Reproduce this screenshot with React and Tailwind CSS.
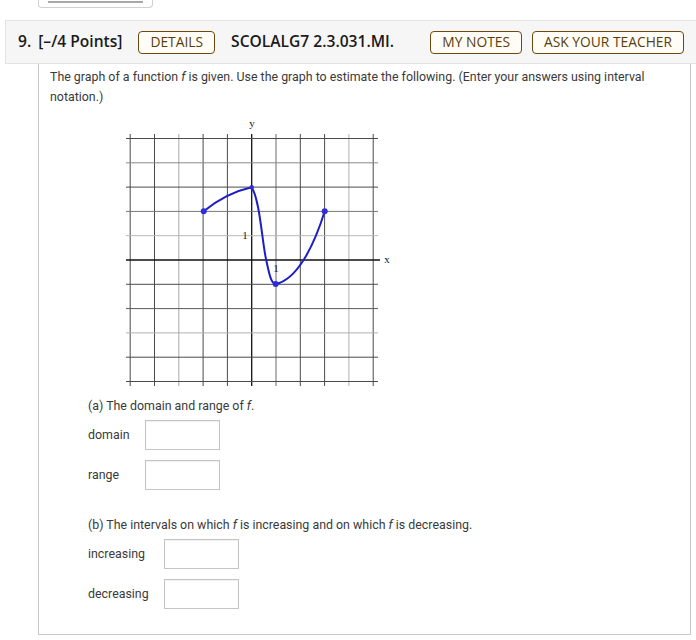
import React from 'react';

const U = 24.3;
const OX = 251.7;
const OY = 259;

// grid line shades, index 0 = -5 ... 10 = 5
const vShade = ['#4a4a4a', '#4a4a4a', '#a8a8a8', '#4a4a4a', '#4a4a4a', '#111', '#6a6a6a', '#4a4a4a', '#4a4a4a', '#b0b0b0', '#4a4a4a'];
const hShade = ['#4a4a4a', '#4a4a4a', '#b0b0b0', '#5a5a5a', '#4a4a4a', '#111', '#b8b8b8', '#777', '#4a4a4a', '#8a8a8a', '#4a4a4a'];

function Graph() {
  const px = (x) => OX + x * U;
  const py = (y) => OY - y * U;
  const steps = [-5, -4, -3, -2, -1, 0, 1, 2, 3, 4, 5];
  return (
    <svg width="280" height="280" viewBox="117 112 280 280" className="block">
      {steps.map((s, i) => (
        <line key={'v' + s} x1={px(s)} x2={px(s)} y1={133} y2={385} stroke={vShade[i]} strokeWidth={s === 0 ? 1.3 : 1} />
      ))}
      {steps.map((s, i) => (
        <line key={'h' + s} x1={126} x2={s === 0 ? 380 : 378} y1={py(-s)} y2={py(-s)} stroke={hShade[10 - i]} strokeWidth={s === 0 ? 1.3 : 1} />
      ))}
      <text x={252} y={126} fontFamily="Liberation Serif, serif" fontSize="11" textAnchor="middle" fill="#222">y</text>
      <text x={387} y={262} fontFamily="Liberation Serif, serif" fontSize="11" textAnchor="middle" fill="#222">x</text>
      <text x={245} y={238} fontFamily="Liberation Serif, serif" fontSize="11" textAnchor="middle" fill="#222">1</text>
      <text x={276} y={271} fontFamily="Liberation Serif, serif" fontSize="11" textAnchor="middle" fill="#222">1</text>
      <path
        d="M203.7,210.3 Q226,192 251.7,186.3 C260,200 262,240 266,258 C269,272 271,283 275.7,283 C296,279 313,248 324.7,210.3"
        fill="none"
        stroke="#1e1ec8"
        strokeWidth="2"
        strokeLinecap="round"
      />
      <circle cx={203.7} cy={210.3} r="3" fill="#2d2ddc" />
      <circle cx={251.7} cy={186.3} r="2.2" fill="#2d2ddc" />
      <circle cx={275.7} cy={283} r="3" fill="#2d2ddc" />
      <circle cx={324.7} cy={210.3} r="3" fill="#2d2ddc" />
    </svg>
  );
}

function Btn({ children }) {
  return (
    <div className="h-[23px] px-[11px] flex items-center rounded-[4px] border-[1.5px] border-[#6b4a12] bg-[#fffdf6] text-[13.8px] font-medium text-[#5a3d0c] leading-none">
      {children}
    </div>
  );
}

function Field({ label, width }) {
  return (
    <div className="flex items-center h-[30px]">
      <div className="text-[12.4px] text-[#3a3a3a]" style={{ width }}>{label}</div>
      <div className="w-[75px] h-[30px] border border-[#c4c4c4] bg-white shadow-[inset_0_1px_1px_rgba(0,0,0,0.06)]" />
    </div>
  );
}

export default function App() {
  return (
    <div className="w-[696px] h-[640px] bg-white overflow-hidden relative font-['Roboto',sans-serif]">
      <div className="ml-[38px] w-[115px] h-[8px] border-x border-b border-[#d0d0d0] rounded-b-[4px] pt-[1px] px-[9px]">
        <div className="h-[2px] bg-[#a8a8a8]" />
      </div>

      <div className="mt-[12px] ml-[5px] h-[44px] bg-[#f6f6f6] border-y border-l border-[#e2e2e2] flex items-center pl-[12px] pr-[12px] font-['Open_Sans',sans-serif]">
        <div className="text-[15.6px] font-semibold text-[#1a1a1a]">
          9.<span className="ml-[7px]">[–/4 Points]</span>
        </div>
        <div className="ml-[16px]"><Btn>DETAILS</Btn></div>
        <div className="ml-[16px] text-[15.6px] font-semibold text-[#1a1a1a]">SCOLALG7 2.3.031.MI.</div>
        <div className="ml-auto flex gap-[10px]">
          <Btn>MY NOTES</Btn>
          <Btn>ASK YOUR TEACHER</Btn>
        </div>
      </div>

      <div className="ml-[38px] w-[653px] h-[571px] border-x border-b border-[#c8c8c8] pl-[11px] pt-[3px]">
        <p className="text-[12.4px] leading-[20px] text-[#3a3a3a]">
          The graph of a function <i>f</i> is given. Use the graph to estimate the following. (Enter your answers using interval
          <br />
          notation.)
        </p>
        <div className="ml-[67px] mt-[6px]">
          <Graph />
        </div>
        <div className="ml-[38px] mt-[3px]">
          <p className="text-[12.4px] leading-[20px] text-[#3a3a3a]">(a) The domain and range of <i>f</i>.</p>
          <div className="mt-[4px] flex flex-col gap-[10px]">
            <Field label="domain" width={57} />
            <Field label="range" width={57} />
          </div>
          <p className="mt-[25px] text-[12.4px] leading-[20px] text-[#3a3a3a]">
            (b) The intervals on which <i>f</i> is increasing and on which <i>f</i> is decreasing.
          </p>
          <div className="mt-[4px] flex flex-col gap-[10px]">
            <Field label="increasing" width={76} />
            <Field label="decreasing" width={76} />
          </div>
        </div>
      </div>
    </div>
  );
}
